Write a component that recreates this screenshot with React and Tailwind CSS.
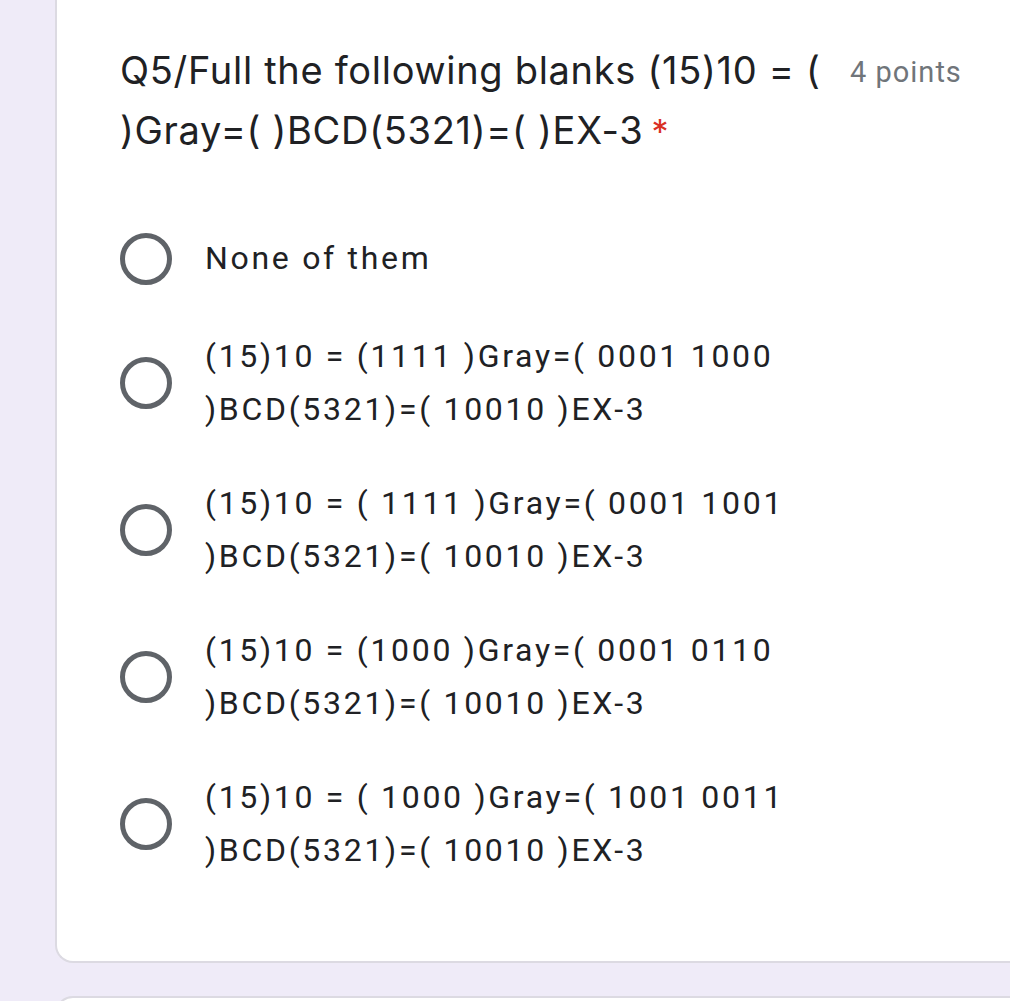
import React from "react";

const options = [
  ["None of them"],
  ["(15)10 = (1111 )Gray=( 0001 1000", ")BCD(5321)=( 10010 )EX-3"],
  ["(15)10 = ( 1111 )Gray=( 0001 1001", ")BCD(5321)=( 10010 )EX-3"],
  ["(15)10 = (1000 )Gray=( 0001 0110", ")BCD(5321)=( 10010 )EX-3"],
  ["(15)10 = ( 1000 )Gray=( 1001 0011", ")BCD(5321)=( 10010 )EX-3"],
];

function Radio() {
  return (
    <div className="h-[52px] w-[52px] shrink-0 rounded-full border-[5px] border-[#5f6368]" />
  );
}

export default function App() {
  return (
    <div className="h-[1001px] w-[1010px] overflow-hidden bg-[#efebf8]">
      {/* Question card */}
      <div className="-mr-[40px] ml-[55px] rounded-bl-[18px] border-b-2 border-l-2 border-[#dcdae2] bg-white pb-[84px] pl-[63px] pt-[40px]">
        <div className="flex items-start">
          <div
            className="w-[725px] text-[38px] leading-[60px] tracking-[0.7px] text-[#202124]"
            style={{ fontFamily: "Inter, 'Open Sans', sans-serif" }}
          >
            Q5/Full the following blanks (15)10 = ( )Gray=( )BCD(5321)=( )EX-3
            <span className="ml-[8px] text-[34px] leading-none text-[#d93025]">*</span>
          </div>
          <div
            className="ml-[5px] text-[29px] leading-[64px] tracking-[1px] text-[#70757a]"
            style={{ fontFamily: "Roboto, sans-serif" }}
          >
            4 points
          </div>
        </div>

        <div
          className="mt-[72px] flex flex-col gap-[41px] text-[32px] leading-[53px] tracking-[2.7px] text-[#202124]"
          style={{ fontFamily: "Roboto, sans-serif" }}
        >
          {options.map((lines, i) => (
            <div key={i} className={"flex items-center " + (i === 0 ? "mb-[4px]" : "")}>
              <Radio />
              <div className="ml-[33px] w-[680px]">
                {lines.map((l, j) => (
                  <div key={j}>{l}</div>
                ))}
              </div>
            </div>
          ))}
        </div>
      </div>

      {/* Next card */}
      <div className="-mr-[40px] ml-[55px] mt-[33px] h-[60px] rounded-tl-[18px] border-l-2 border-t-2 border-[#dcdae2] bg-white" />
    </div>
  );
}
